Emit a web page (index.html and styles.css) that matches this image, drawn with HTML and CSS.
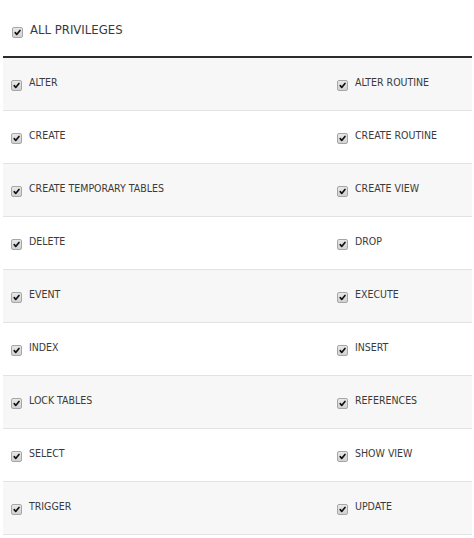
FILE: index.html
```html
<!DOCTYPE html>
<html lang="en">
<head>
    <meta charset="UTF-8">
    <title>Privileges</title>
    <link rel="stylesheet" href="styles.css">
</head>
<body>
<div class="privileges">
    <div class="all-row">
        <span class="check"><svg viewBox="0 0 12 12"><path d="M3 6.2 L5 8.6 L9.3 3.2" /></svg></span>
        <span class="all-label">ALL PRIVILEGES</span>
    </div>

    <div class="priv-table">
        <div class="priv-row">
            <div class="cell left"><span class="check"><svg viewBox="0 0 12 12"><path d="M3 6.2 L5 8.6 L9.3 3.2" /></svg></span><span class="label">ALTER</span></div>
            <div class="cell right"><span class="check"><svg viewBox="0 0 12 12"><path d="M3 6.2 L5 8.6 L9.3 3.2" /></svg></span><span class="label">ALTER ROUTINE</span></div>
        </div>
        <div class="priv-row">
            <div class="cell left"><span class="check"><svg viewBox="0 0 12 12"><path d="M3 6.2 L5 8.6 L9.3 3.2" /></svg></span><span class="label">CREATE</span></div>
            <div class="cell right"><span class="check"><svg viewBox="0 0 12 12"><path d="M3 6.2 L5 8.6 L9.3 3.2" /></svg></span><span class="label">CREATE ROUTINE</span></div>
        </div>
        <div class="priv-row">
            <div class="cell left"><span class="check"><svg viewBox="0 0 12 12"><path d="M3 6.2 L5 8.6 L9.3 3.2" /></svg></span><span class="label">CREATE TEMPORARY TABLES</span></div>
            <div class="cell right"><span class="check"><svg viewBox="0 0 12 12"><path d="M3 6.2 L5 8.6 L9.3 3.2" /></svg></span><span class="label">CREATE VIEW</span></div>
        </div>
        <div class="priv-row">
            <div class="cell left"><span class="check"><svg viewBox="0 0 12 12"><path d="M3 6.2 L5 8.6 L9.3 3.2" /></svg></span><span class="label">DELETE</span></div>
            <div class="cell right"><span class="check"><svg viewBox="0 0 12 12"><path d="M3 6.2 L5 8.6 L9.3 3.2" /></svg></span><span class="label">DROP</span></div>
        </div>
        <div class="priv-row">
            <div class="cell left"><span class="check"><svg viewBox="0 0 12 12"><path d="M3 6.2 L5 8.6 L9.3 3.2" /></svg></span><span class="label">EVENT</span></div>
            <div class="cell right"><span class="check"><svg viewBox="0 0 12 12"><path d="M3 6.2 L5 8.6 L9.3 3.2" /></svg></span><span class="label">EXECUTE</span></div>
        </div>
        <div class="priv-row">
            <div class="cell left"><span class="check"><svg viewBox="0 0 12 12"><path d="M3 6.2 L5 8.6 L9.3 3.2" /></svg></span><span class="label">INDEX</span></div>
            <div class="cell right"><span class="check"><svg viewBox="0 0 12 12"><path d="M3 6.2 L5 8.6 L9.3 3.2" /></svg></span><span class="label">INSERT</span></div>
        </div>
        <div class="priv-row">
            <div class="cell left"><span class="check"><svg viewBox="0 0 12 12"><path d="M3 6.2 L5 8.6 L9.3 3.2" /></svg></span><span class="label">LOCK TABLES</span></div>
            <div class="cell right"><span class="check"><svg viewBox="0 0 12 12"><path d="M3 6.2 L5 8.6 L9.3 3.2" /></svg></span><span class="label">REFERENCES</span></div>
        </div>
        <div class="priv-row">
            <div class="cell left"><span class="check"><svg viewBox="0 0 12 12"><path d="M3 6.2 L5 8.6 L9.3 3.2" /></svg></span><span class="label">SELECT</span></div>
            <div class="cell right"><span class="check"><svg viewBox="0 0 12 12"><path d="M3 6.2 L5 8.6 L9.3 3.2" /></svg></span><span class="label">SHOW VIEW</span></div>
        </div>
        <div class="priv-row">
            <div class="cell left"><span class="check"><svg viewBox="0 0 12 12"><path d="M3 6.2 L5 8.6 L9.3 3.2" /></svg></span><span class="label">TRIGGER</span></div>
            <div class="cell right"><span class="check"><svg viewBox="0 0 12 12"><path d="M3 6.2 L5 8.6 L9.3 3.2" /></svg></span><span class="label">UPDATE</span></div>
        </div>
    </div>
</div>
</body>
</html>
```

FILE: styles.css
```css
body {
    margin: 0;
    background-color: #ffffff;
    font-family: 'DejaVu Sans Condensed', 'DejaVu Sans', sans-serif;
    color: #3a3a3a;
}

.privileges {
    width: 469px;
    margin-left: 3px;
}

.all-row {
    display: flex;
    align-items: flex-start;
    height: 58px;
    padding-left: 9px;
    border-bottom: 2px solid #2b2b2b;
    box-sizing: border-box;
}

.all-row .check {
    margin-top: 27px;
}

.all-label {
    font-size: 13px;
    line-height: 16px;
    margin-top: 22px;
    margin-left: 7px;
}

.priv-row {
    display: flex;
    height: 53px;
    border-bottom: 1px solid #e2e2e2;
    box-sizing: border-box;
}

.priv-row:nth-child(odd) {
    background-color: #f7f7f7;
}

.cell {
    display: flex;
    align-items: flex-start;
    padding-left: 8px;
    box-sizing: border-box;
}

.cell.left {
    width: 326px;
}

.cell.right {
    flex: 1;
}

.cell .check {
    margin-top: 22px;
}

.label {
    font-size: 10.5px;
    line-height: 12px;
    margin-top: 18px;
    margin-left: 7px;
}

.check {
    display: inline-block;
    width: 11px;
    height: 11px;
    border: 1px solid #a6a6a6;
    border-radius: 2px;
    background: linear-gradient(#e8e8e8, #d2d2d2);
    box-sizing: border-box;
    flex-shrink: 0;
}

.check svg {
    display: block;
    width: 9px;
    height: 9px;
    fill: none;
    stroke: #111;
    stroke-width: 2.2;
    stroke-linecap: round;
    stroke-linejoin: round;
}
```
